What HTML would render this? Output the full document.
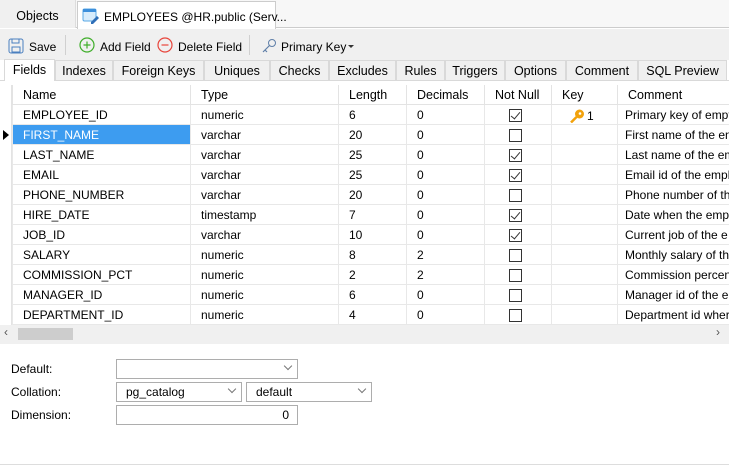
<!DOCTYPE html><html><head><style>
*{box-sizing:border-box;margin:0;padding:0}
body{width:729px;height:465px;overflow:hidden;background:#fff;font-family:"Liberation Sans",sans-serif;font-size:12px;color:#000;position:relative}
.a{position:absolute;white-space:nowrap}
.tab{position:absolute;top:60px;height:20px;border:1px solid #d9d9d9;border-bottom:none;background:#f0f0f0;font-size:12.5px;text-align:center;line-height:20px}
.cb{position:absolute;width:13px;height:13px;border:1px solid #333;background:#fff}
.cb.c::after{content:"";position:absolute;left:3px;top:0px;width:4px;height:8px;border:solid #333;border-width:0 1px 1px 0;transform:rotate(40deg)}
.dd{position:absolute;border:1px solid #adadad;height:20px;background:#fff;line-height:18px;padding-left:9px;font-size:12px}
.dd .v{position:absolute;right:6px;top:3px;width:6px;height:6px;border:solid #777;border-width:0 1px 1px 0;transform:rotate(45deg)}
</style></head><body>
<div class="a" style="left:0;top:0;width:729px;height:28px;background:#f7f7f7;border-bottom:1px solid #ccc"></div>
<div class="a" style="left:0;top:0;width:76px;height:28px;background:#f0f0f0;border-right:1px solid #ddd;text-align:center;line-height:32px;font-size:12.5px">Objects</div>
<div class="a" style="left:77px;top:1px;width:199px;height:28px;background:#fff;border:1px solid #ccc;border-bottom:none;font-size:12px;line-height:30px;padding-left:26px">EMPLOYEES @HR.public (Serv...</div>
<svg class="a" style="left:82px;top:8px" width="18" height="16"><rect x="1" y="1" width="13" height="12" rx="1.5" fill="#d8ecfb" stroke="#5aa8e6"/><rect x="1" y="1" width="13" height="3" fill="#3d8fdb"/><path d="M9 14l6-6 2 2-6 6h-2z" fill="#2f6fb8"/></svg>
<div class="a" style="left:0;top:29px;width:729px;height:31px;background:#f0f0f0"></div>
<svg class="a" style="left:8px;top:38px" width="16" height="16"><rect x="1" y="1" width="14" height="14" rx="2" fill="none" stroke="#4a7fbf"/><rect x="4" y="1" width="7" height="4" fill="none" stroke="#4a7fbf"/><rect x="4" y="9" width="8" height="5" fill="none" stroke="#4a7fbf"/></svg>
<div class="a" style="left:29px;top:40px;font-size:12px">Save</div>
<div class="a" style="left:65px;top:35px;width:1px;height:20px;background:#d0d0d0"></div>
<svg class="a" style="left:79px;top:37px" width="16" height="16"><circle cx="8" cy="8" r="7" fill="none" stroke="#3fae2a" stroke-width="1.2"/><path d="M8 4.5v7M4.5 8h7" stroke="#3fae2a" stroke-width="1.2"/></svg>
<div class="a" style="left:100px;top:40px;font-size:12px">Add Field</div>
<svg class="a" style="left:157px;top:37px" width="16" height="16"><circle cx="8" cy="8" r="7" fill="none" stroke="#e8453c" stroke-width="1.2"/><path d="M4.5 8h7" stroke="#e8453c" stroke-width="1.2"/></svg>
<div class="a" style="left:178px;top:40px;font-size:12px">Delete Field</div>
<div class="a" style="left:249px;top:35px;width:1px;height:20px;background:#d0d0d0"></div>
<svg class="a" style="left:261px;top:38px" width="16" height="16"><circle cx="11" cy="5" r="3.5" fill="none" stroke="#5f7fa8"/><path d="M8.5 7.5L2 14M4 12l2 2" stroke="#5f7fa8" stroke-width="1.2"/></svg>
<div class="a" style="left:281px;top:40px;font-size:12px">Primary Key</div>
<div class="a" style="left:348px;top:45px;border:3px solid transparent;border-top:3px solid #333"></div>
<div class="a" style="left:0;top:80px;width:729px;height:1px;background:#d9d9d9"></div>
<div class="tab" style="left:4px;width:51px;top:59px;height:22px;background:#fff">Fields</div>
<div class="tab" style="left:55px;width:58px">Indexes</div>
<div class="tab" style="left:113px;width:91px">Foreign Keys</div>
<div class="tab" style="left:204px;width:66px">Uniques</div>
<div class="tab" style="left:270px;width:59px">Checks</div>
<div class="tab" style="left:329px;width:67px">Excludes</div>
<div class="tab" style="left:396px;width:49px">Rules</div>
<div class="tab" style="left:445px;width:60px">Triggers</div>
<div class="tab" style="left:505px;width:61px">Options</div>
<div class="tab" style="left:566px;width:72px">Comment</div>
<div class="tab" style="left:638px;width:89px">SQL Preview</div>
<div id="g"></div>
<div class="a" style="left:0;top:325px;width:729px;height:19px;background:#f0f0f0"></div>
<div class="a" style="left:18px;top:328px;width:55px;height:12px;background:#cdcdcd"></div>
<div class="a" style="left:4px;top:325px;font-size:12px;color:#555">‹</div>
<div class="a" style="left:716px;top:325px;font-size:12px;color:#555">›</div>
<div class="a" style="left:11px;top:362px">Default:</div>
<div class="dd" style="left:116px;top:359px;width:182px"><span class="v"></span></div>
<div class="a" style="left:11px;top:385px">Collation:</div>
<div class="dd" style="left:116px;top:382px;width:126px">pg_catalog<span class="v"></span></div>
<div class="dd" style="left:246px;top:382px;width:126px">default<span class="v"></span></div>
<div class="a" style="left:11px;top:408px">Dimension:</div>
<div class="dd" style="left:116px;top:405px;width:182px;text-align:right;padding-right:8px">0</div>
<div class="a" style="left:0;top:464px;width:729px;height:1px;background:#ddd"></div>
<script>
var cols=[12,190,338,406,484,551,617,729];
var heads=["Name","Type","Length","Decimals","Not Null","Key","Comment"];
var rows=[["EMPLOYEE_ID","numeric","6","0",1,"Primary key of empt"],["FIRST_NAME","varchar","20","0",0,"First name of the en"],["LAST_NAME","varchar","25","0",1,"Last name of the em"],["EMAIL","varchar","25","0",1,"Email id of the empl"],["PHONE_NUMBER","varchar","20","0",0,"Phone number of th"],["HIRE_DATE","timestamp","7","0",1,"Date when the empl"],["JOB_ID","varchar","10","0",1,"Current job of the e"],["SALARY","numeric","8","2",0,"Monthly salary of th"],["COMMISSION_PCT","numeric","2","2",0,"Commission percen"],["MANAGER_ID","numeric","6","0",0,"Manager id of the e"],["DEPARTMENT_ID","numeric","4","0",0,"Department id wher"]];
var h='';
for(var i=0;i<7;i++){h+='<div class="a" style="left:'+cols[i]+'px;top:85px;width:'+(cols[i+1]-cols[i])+'px;height:20px;border-left:1px solid #e3e3e3;border-bottom:1px solid #e3e3e3;padding-left:10px;line-height:20px;font-size:12.5px">'+heads[i]+'</div>';}
h+='<div class="a" style="left:0;top:85px;width:12px;height:240px;border-right:1px solid #e3e3e3"></div>';
rows.forEach(function(r,j){var y=105+j*20;
for(var i=0;i<7;i++){var bg=(j==1&&i==0)?'background:#3d9cf0;color:#fff;':'';var t='';
if(i<4)t=r[i];if(i==6)t=r[5];
h+='<div class="a" style="'+bg+'left:'+cols[i]+'px;top:'+y+'px;width:'+(cols[i+1]-cols[i])+'px;height:20px;border-left:1px solid #e8e8e8;border-bottom:1px solid #e8e8e8;padding-left:'+(i==6?7:10)+'px;line-height:21px;overflow:hidden">'+t+'</div>';}
h+='<div class="cb'+(r[4]?' c':'')+'" style="left:509px;top:'+(y+4)+'px"></div>';});
h+='<svg class="a" style="left:569px;top:109px" width="16" height="14"><circle cx="10.5" cy="5" r="4.5" fill="#f2a20c"/><circle cx="11" cy="4.5" r="1.3" fill="#fff"/><path d="M7.5 8L2 13.5" stroke="#f2a20c" stroke-width="2.5"/></svg><div class="a" style="left:587px;top:109px">1</div>';
h+='<div class="a" style="left:3px;top:130px;border:5px solid transparent;border-left:6px solid #000"></div>';
document.getElementById('g').innerHTML=h;
</script>
</body></html>
